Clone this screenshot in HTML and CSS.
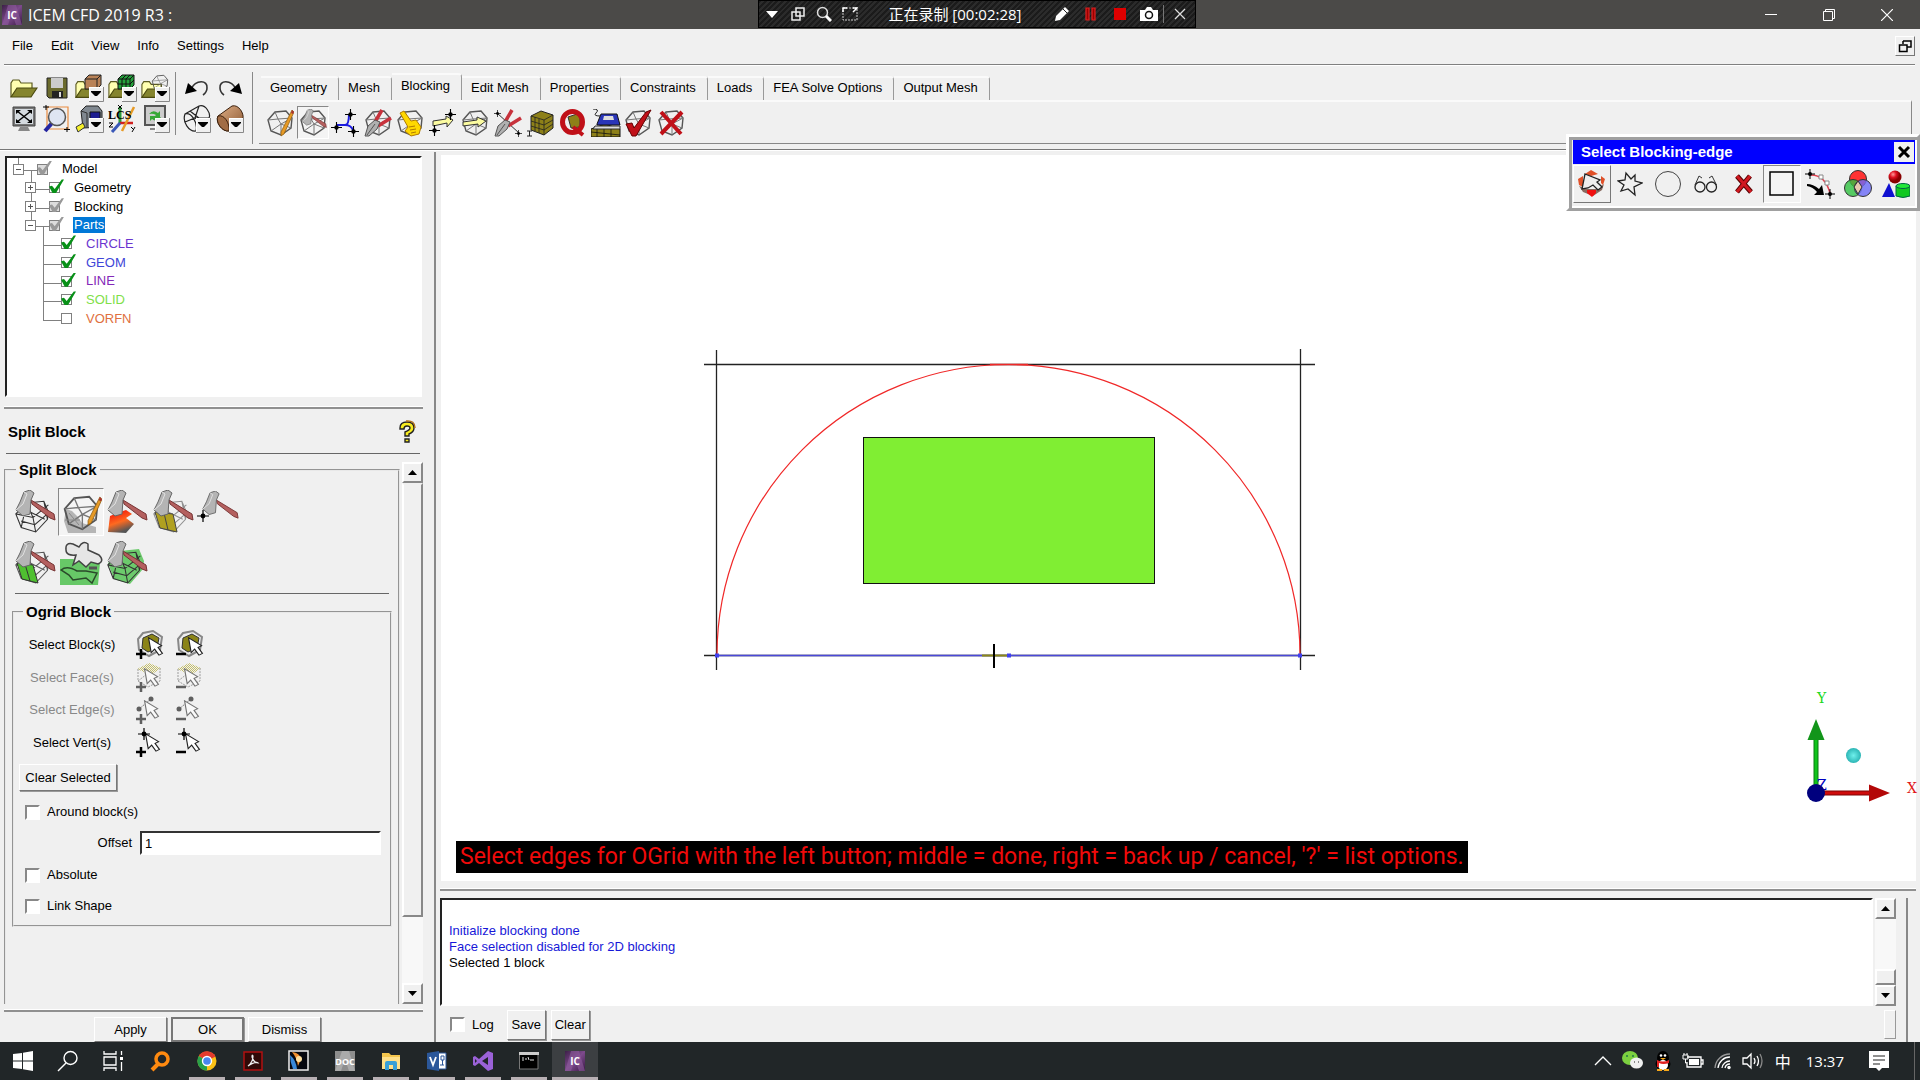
FILE: index.html
```html
<!DOCTYPE html>
<html lang="en">
	<head>
		<meta charset="utf-8" />
		<title>ICEM CFD 2019 R3</title>
		<meta name="viewport" content="width=device-width, initial-scale=1.0">
		<link rel="stylesheet" href="styles.css">
	</head>
	<body>
		<!-- shared drawings -->
		<svg class="defs" aria-hidden="true">
			<defs>
				<linearGradient id="fire" x1="0" y1="0" x2=".4" y2="1"><stop offset="0" stop-color="#e00"/><stop offset=".6" stop-color="#ff6a20"/><stop offset="1" stop-color="#555"/></linearGradient>
				<linearGradient id="wood" x1="0" y1="0" x2="1" y2="1"><stop offset="0" stop-color="#e0b088"/><stop offset="1" stop-color="#8a5630"/></linearGradient>
				<linearGradient id="purple" x1="0" y1="0" x2="1" y2="1"><stop offset="0" stop-color="#3d1f48"/><stop offset=".5" stop-color="#7d4a8c"/><stop offset="1" stop-color="#3a1a45"/></linearGradient>
				<radialGradient id="teal"><stop offset="0" stop-color="#6ff0ec"/><stop offset="1" stop-color="#2cb5b5"/></radialGradient>
				<radialGradient id="ball" cx=".35" cy=".3"><stop offset="0" stop-color="#ff9a9a"/><stop offset=".5" stop-color="#e01020"/><stop offset="1" stop-color="#800"/></radialGradient>
				<pattern id="dots" width="2" height="2" patternUnits="userSpaceOnUse"><rect width="1" height="1" fill="#a89e10"/><rect x="1" y="1" width="1" height="1" fill="#a89e10"/></pattern>
			</defs>
			<symbol id="wire" viewBox="0 0 28 28">
				<path d="M9 3 20 2 26 9 25 19 15 26 5 22 2 11Z" fill="none" stroke="#555" stroke-width="1.4"/>
				<path d="M9 3 12 10 26 9M2 11 12 10 15 15 15 26M5 22 15 15 25 19M15 15 26 9" fill="none" stroke="#777" stroke-width="1"/>
			</symbol>
			<symbol id="axe" viewBox="0 0 42 42">
				<path d="M17 10 40 24 41 30 36 28 18 14Z" fill="#b4605f" stroke="#733" stroke-width="1"/>
				<path d="M10 2 16 0 20 3 17 10 16 24 9 26 2 20 6 12Z" fill="#b4b4b4" stroke="#666" stroke-width="1"/>
				<path d="M10 2 13 4 9 14 2 20" fill="none" stroke="#e2e2e2" stroke-width="1"/>
			</symbol>
			<symbol id="cage" viewBox="0 0 42 42">
				<path d="M14 10 33 8 38 20 37 28 24 42 8 37 2 22ZM2 22 21 26 38 12M21 26 24 42M14 10 8 37M8 30 23 34 37 22M2 22 14 10 21 26M33 8 37 28M14 18 34 28" fill="none" stroke="#333" stroke-width="1.2"/>
			</symbol>
			<symbol id="pencil" viewBox="0 0 28 28">
				<path d="M26 1 28 3 18 25 15 27 15 23Z" fill="#e79a25" stroke="#8a5a10" stroke-width=".7"/>
				<path d="M26 1 28 3 27 5 25 4Z" fill="#a33"/>
			</symbol>
			<symbol id="spark" viewBox="0 0 12 12"><path d="M6 0V12M0 6H12" stroke="#000" stroke-width="1.2"/><circle cx="6" cy="6" r="2.4"/></symbol>
			<symbol id="drop" viewBox="0 0 15 15"><path d="M0 0H15V15H0Z" fill="#efefef"/><path d="M0 15V0H15" fill="none" stroke="#fff" stroke-width="2"/><path d="M0 14.5H14.5V0" fill="none" stroke="#888"/><path d="M2 4H12V5L8 9H6L2 5Z"/></symbol>
			<symbol id="folder" viewBox="0 0 28 22"><path d="M1 20V6L3 3H9L11 6H22V11" fill="#ffffb0" stroke="#5b5a20" stroke-width="1.2"/><path d="M1 20 7 11H27L21 20Z" fill="#85852e" stroke="#4b4a10" stroke-width="1.2"/></symbol>
			<symbol id="arrow" viewBox="0 0 18 22"><path d="M1 1 4 18 8 14 13 21 17 19 12 12 16 10Z" fill="#fff" stroke="#222" stroke-width="1.3"/></symbol>
			<symbol id="pliers" viewBox="0 0 28 28"><path d="M11 13 18 1M14 17 27 9" stroke="#c8323c" stroke-width="3.5" fill="none"/><path d="M1 27 4 17 11 11 16 13 13 20 5 27Z" fill="#b0b0b0" stroke="#555"/><path d="M3 26 11 15" stroke="#555"/></symbol>
			<symbol id="plus" viewBox="0 0 10 10"><path d="M5 0V10M0 5H10" stroke="#000" stroke-width="2.5"/></symbol>
			<symbol id="minus" viewBox="0 0 10 10"><path d="M0 5H10" stroke="#000" stroke-width="2.5"/></symbol>
			<symbol id="iclogo" viewBox="0 0 20 20"><path d="M0 0H20V20H0Z" fill="url(#purple)"/><path d="M6 0H14L20 20H14L10 8 6 20H0Z" fill="#8d5c9c" opacity=".6"/></symbol>
		</svg>

		<header class="titlebar">
			<svg width="20" height="20"><use href="#iclogo"/><text x="10" y="14" class="ic-text">IC</text></svg>
			<h1>ICEM CFD 2019 R3 :</h1>
			<div class="window-controls">
				<button aria-label="Minimize"><svg width="12" height="12"><path d="M0 5.5H12" stroke="#fff"/></svg></button>
				<button aria-label="Restore"><svg width="12" height="12"><path d="M.5 2.5H9.5V11.5H.5ZM2.5 2V.5H11.5V9.5H10" fill="none" stroke="#fff"/></svg></button>
				<button aria-label="Close"><svg width="12" height="12"><path d="M0 0 12 12M12 0 0 12" stroke="#fff" stroke-width="1.2"/></svg></button>
			</div>
		</header>

		<div class="recorder">
			<div class="rec-left">
				<button aria-label="Menu"><svg width="14" height="14"><path d="M1 4H13L7 11Z" fill="#fff"/></svg></button>
				<button aria-label="Window"><svg width="14" height="14"><path d="M5 1H13V9H5ZM1 5H9V13H1Z" fill="none" stroke="#eee" stroke-width="1.5"/></svg></button>
				<button aria-label="Zoom"><svg width="16" height="16"><circle cx="6.5" cy="6.5" r="5" fill="none" stroke="#ddd" stroke-width="1.5"/><path d="M10 10 15 15" stroke="#fff" stroke-width="3"/></svg></button>
				<button aria-label="Region"><svg width="16" height="14"><path d="M1 1H15V13H1Z" fill="none" stroke="#ccc" stroke-dasharray="2 1"/><path d="M1 5V1H5M11 1H15L11 5" fill="none" stroke="#fff" stroke-width="1.5"/></svg></button>
			</div>
			<span class="rec-time">正在录制 [00:02:28]</span>
			<div class="rec-right">
				<button aria-label="Draw"><svg width="18" height="18"><path d="M2 16 3 11 12 2 16 6 7 15Z" fill="#fff"/><path d="M10 4 14 8" stroke="#222"/></svg></button>
				<button aria-label="Pause"><svg width="12" height="14"><path d="M1 1H4V13H1ZM7 1H10V13H7Z" fill="#900" stroke="#e22020" stroke-width="1.2"/></svg></button>
				<button aria-label="Stop"><svg width="12" height="12"><path d="M0 0H12V12H0Z" fill="#e00000"/></svg></button>
				<button aria-label="Snapshot"><svg width="18" height="14"><path d="M0 3H5L7 0H11L13 3H18V14H0Z" fill="#fff"/><circle cx="9" cy="8" r="3.5" fill="none" stroke="#111" stroke-width="1.5"/></svg></button>
				<button class="rec-close" aria-label="Close recorder"><svg width="12" height="12"><path d="M1 1 11 11M11 1 1 11" stroke="#ddd" stroke-width="1.2"/></svg></button>
			</div>
		</div>

		<nav class="menubar">
			<a href="#">File</a><a href="#">Edit</a><a href="#">View</a><a href="#">Info</a><a href="#">Settings</a><a href="#">Help</a>
			<button class="mdi" aria-label="Restore view"><svg width="14" height="14"><path d="M5 2H13V8H9M5 5V2" fill="none" stroke="#000" stroke-width="1.5"/><path d="M1.5 6H9V12.5H1.5Z" fill="none" stroke="#000" stroke-width="1.5"/></svg></button>
		</nav>

		<div class="toolbar">
			<div class="tools files">
				<button aria-label="Open project"><svg width="28" height="22"><use href="#folder"/></svg></button>
				<button aria-label="Save project"><svg width="22" height="22"><path d="M1 1H21V21H3L1 19Z" fill="#6b6b2e" stroke="#222"/><path d="M5 1H17V11H5Z" fill="#ccc"/><path d="M6 14H17V21H6Z" fill="#222"/><path d="M13 15H15V20H13Z" fill="#ddd"/></svg></button>
				<button aria-label="Open geometry"><svg width="30" height="28"><use href="#folder" y="4" width="26" height="22"/><path d="M10 5 14 1H26V11L22 15H10Z" fill="#b98257" stroke="#222"/><path d="M10 5H22V15M22 5 26 1" fill="none" stroke="#222"/><use href="#drop" x="14" y="13" width="15" height="15"/></svg></button>
				<button aria-label="Open mesh"><svg width="30" height="28"><use href="#folder" y="4" width="26" height="22"/><path d="M10 5 14 1H26V11L22 15H10Z" fill="#25a13c" stroke="#111"/><path d="M10 5H22V15M22 5 26 1M14 5V15M18 5V15M10 10H22L26 6M14 5 18 1M18 5 22 1" fill="none" stroke="#111"/><use href="#drop" x="14" y="13" width="15" height="15"/></svg></button>
				<button aria-label="Open blocking"><svg width="30" height="28"><use href="#folder" y="4" width="26" height="22"/><use href="#wire" x="10" width="18" height="18"/><use href="#drop" x="14" y="13" width="15" height="15"/></svg></button>
				<button aria-label="Fit window"><svg width="26" height="26"><path d="M2 1H24V20H2Z" fill="#777" stroke="#444"/><path d="M4 3H22V18H4Z" fill="#d5dbe0"/><path d="M6 5 20 16M20 5 6 16" stroke="#000" stroke-width="1.5"/><path d="M5 4H10L5 8ZM21 4H16L21 8ZM5 17H10L5 13ZM21 17H16L21 13Z"/><path d="M9 21H17L19 25H7Z" fill="#888"/></svg></button>
				<button aria-label="Box zoom"><svg width="28" height="28"><path d="M4 2H25V24H4Z" fill="none" stroke="#e98c40" stroke-width="1.2"/><path d="M10 17 2 26" stroke="#2525a0" stroke-width="4"/><circle cx="14" cy="12" r="8.5" fill="#dfe5f2" stroke="#555" stroke-width="1.5"/><path d="M24 22V27M21 24.5H27M0 2H6M3 0V5" stroke="#000"/></svg></button>
				<button aria-label="Measure"><svg width="30" height="28"><path d="M6 6 11 1H23L27 6V22L8 23Z" fill="#808890" stroke="#222"/><path d="M15 7H25V14H15Z" fill="#1c1c90" stroke="#111"/><path d="M6 6 12 8V22" fill="none" stroke="#333"/><path d="M1 22 8 18 10 22 3 27Z" fill="#f5f02a" stroke="#333"/><use href="#drop" x="14" y="13" width="15" height="15"/></svg></button>
				<button aria-label="Local coordinate system"><svg width="30" height="28"><path d="M12 18V2" stroke="#2a9a3a" stroke-width="3"/><path d="M12 18H25" stroke="#d02020" stroke-width="2.5"/><path d="M12 18 4 27" stroke="#3a58b8" stroke-width="3"/><path d="M26 2 14 26" stroke="#e79a25" stroke-width="2.5"/><text x="0" y="14" class="lcs">LCS</text><path d="M10 0 14 4M14 0 10 4M1 18H5L1 22H5M23 22 25 24M27 22 24 27" stroke="#000" fill="none"/></svg></button>
				<button aria-label="Refresh"><svg width="30" height="28"><path d="M4 1H24V20H4Z" fill="#ccc" stroke="#555" stroke-width="2"/><path d="M8 9Q12 4 17 8L19 6V12H13L15 10Q12 8 8 9M20 12Q16 18 11 14L9 16V11H14" fill="#37a837"/><path d="M9 24H16" stroke="#888" stroke-width="2"/><use href="#drop" x="14" y="13" width="15" height="15"/></svg></button>
			</div>
			<div class="tools views">
				<button aria-label="Undo"><svg width="26" height="18"><path d="M7 10C12 0 24 1 23 9Q23 13 19 16" fill="none" stroke="#333" stroke-width="1.6"/><path d="M1 15 4 4 13 12Z"/></svg></button>
				<button aria-label="Redo"><svg width="26" height="18"><path d="M19 10C14 0 2 1 3 9Q3 13 7 16" fill="none" stroke="#333" stroke-width="1.6"/><path d="M25 15 22 4 13 12Z"/></svg></button>
				<button aria-label="Wireframe"><svg width="30" height="30"><path d="M3 10 17 2C24 0 29 10 27 14L14 27C7 28 0 18 3 10ZM3 10C9 8 16 18 14 27M17 2 13 14 27 14M3 18 13 14 22 20M8 7 22 18" fill="none" stroke="#222" stroke-width="1.2"/><use href="#drop" x="14" y="14" width="15" height="15"/></svg></button>
				<button aria-label="Solid"><svg width="30" height="30"><path d="M3 12 17 2C24 0 29 10 28 14L14 27C7 28 0 18 3 12Z" fill="url(#wood)" stroke="#3a200d"/><path d="M3 12C9 10 15 19 14 27 7 28 0 18 3 12Z" fill="#a26d45" stroke="#3a200d"/><use href="#drop" x="14" y="14" width="15" height="15"/></svg></button>
			</div>
			<div class="tabs">
				<div class="tablist">
					<button>Geometry</button><button>Mesh</button><button class="current">Blocking</button><button>Edit Mesh</button><button>Properties</button><button>Constraints</button><button>Loads</button><button>FEA Solve Options</button><button>Output Mesh</button>
				</div>
				<div class="tabpanel">
					<div class="blocktools">
						<button aria-label="Create block"><svg width="28" height="28"><use href="#wire"/><use href="#pencil"/></svg></button>
						<button class="sunken" aria-label="Split block"><svg width="28" height="28"><use href="#wire"/><use href="#axe" width="28" height="26" x="1"/></svg></button>
						<button aria-label="Merge vertices"><svg width="28" height="28"><path d="M6 16H14Q18 16 18 5M14 16Q20 16 22 21" fill="none" stroke="#1c1ce0" stroke-width="2"/><use href="#spark" x="14" y="0" width="11" height="11"/><use href="#spark" x="0" y="13" width="11" height="11"/><use href="#spark" x="17" y="17" width="11" height="11"/></svg></button>
						<button aria-label="Edit block"><svg width="28" height="28"><use href="#wire"/><use href="#pliers"/></svg></button>
						<button aria-label="Associate"><svg width="28" height="28"><use href="#wire"/><path d="M4 4 8 2 15 12 20 11 25 18 23 25 15 27 9 22 12 18Z" fill="#ffd800" stroke="#b07a00"/><path d="M13 18 19 17M14 21 20 20M15 24 20 23" stroke="#b07a00"/></svg></button>
						<button aria-label="Move vertex"><svg width="28" height="28"><path d="M4 12 17 10V7L24 11 18 18V14L4 17Z" fill="#fbfba0" stroke="#333"/><use href="#spark" x="16" y="0" width="11" height="11"/><use href="#spark" x="0" y="16" width="11" height="11"/></svg></button>
						<button aria-label="Transform blocks"><svg width="28" height="28"><use href="#wire"/><path d="M2 13 16 11V8L25 12 17 18V15L2 17Z" fill="#fbfba0" stroke="#333"/></svg></button>
						<button aria-label="Edit edge"><svg width="28" height="28"><path d="M3 4 25 24" stroke="#333"/><use href="#pliers"/><use href="#spark" x="0" y="1" width="7" height="7"/><use href="#spark" x="21" y="21" width="7" height="7"/></svg></button>
						<button aria-label="Pre-mesh params"><svg width="28" height="28"><path d="M4 7 14 2 26 6V19L17 26 4 21Z" fill="#8d8018" stroke="#222"/><path d="M4 7 17 11 26 6M17 11V26M4 12 17 16 26 11M4 17 17 21 26 15M8 8V22M12 10V24" fill="none" stroke="#222" stroke-width=".8"/><path d="M0 22H5M0 27H5M2.5 22V27" stroke="#222"/></svg></button>
						<button aria-label="Pre-mesh quality"><svg width="28" height="28"><path d="M9 8 18 5 21 9V18L12 19Z" fill="#8d8018" stroke="#333"/><ellipse cx="13.5" cy="13" rx="10" ry="10.5" fill="none" stroke="#c01018" stroke-width="5"/><path d="M14 18 24 26" stroke="#c01018" stroke-width="4"/></svg></button>
						<button aria-label="Smooth"><svg width="30" height="28"><path d="M0 20 14 15 29 20V28H0Z" fill="#8d8018" stroke="#111"/><path d="M0 23 29 26M6 19V28M13 17V28M20 18V28" stroke="#111" stroke-width=".8"/><path d="M6 15 10 5H26L29 16H6Z" fill="#2a35b8" stroke="#111"/><path d="M13 7H22L23 11H12Z" fill="#ddd"/><path d="M4 17H29V20H2Z" fill="#ddd" stroke="#333"/><path d="M2 0Q9 0 5 4 2 7 9 7" fill="none" stroke="#222"/></svg></button>
						<button aria-label="Block checks"><svg width="28" height="28"><use href="#wire"/><path d="M2 15 8 14 10 19 22 3 27 1 12 27H8Z" fill="#c01018" stroke="#600"/></svg></button>
						<button aria-label="Delete block"><svg width="28" height="28"><use href="#wire"/><path d="M4 3 24 25M25 3 4 25" stroke="#c01018" stroke-width="4"/></svg></button>
					</div>
				</div>
			</div>
		</div>

		<main>
			<section class="side">
				<div class="tree">
					<svg class="branches" width="80" height="172"><path d="M11.5 0V12M17 12.5H30M24.5 12V69M29 31.5H42M29 50.5H42M29 68.5H42M36.5 69V162.500M36 87.500H54M36 106.500H54M36 125.500H54M36 143.500H54M36 162.500H54" fill="none" stroke="#808080"/></svg>
					<ul>
						<li><button class="minus" aria-label="Collapse"></button><label><input type="checkbox" class="part" checked><span>Model</span></label></li>
						<li class="l1"><button class="plus" aria-label="Expand"></button><label><input type="checkbox" checked><span>Geometry</span></label></li>
						<li class="l1"><button class="plus" aria-label="Expand"></button><label><input type="checkbox" class="part" checked><span>Blocking</span></label></li>
						<li class="l1"><button class="minus" aria-label="Collapse"></button><label><input type="checkbox" class="part" checked><span class="selected">Parts</span></label></li>
						<li class="l2 circle"><label><input type="checkbox" checked><span>CIRCLE</span></label></li>
						<li class="l2 geom"><label><input type="checkbox" checked><span>GEOM</span></label></li>
						<li class="l2 line"><label><input type="checkbox" checked><span>LINE</span></label></li>
						<li class="l2 solid"><label><input type="checkbox" checked><span>SOLID</span></label></li>
						<li class="l2 vorfn"><label><input type="checkbox"><span>VORFN</span></label></li>
					</ul>
				</div>
				<div class="rule"></div>
				<div class="side-head">
					<h2>Split Block</h2>
					<button aria-label="Help"><svg width="18" height="24"><path d="M2 8Q2 2 9 2 16 2 16 8 16 12 11 14V16H7V12Q12 10 12 8 12 6 9 6 6 6 6 9H2ZM7 19H11V22H7Z" fill="#f8ec20" stroke="#222" stroke-width="1.4"/><path d="M8 1Q17 0 17 8" fill="none" stroke="#b07020" stroke-width="1.5"/></svg></button>
				</div>
				<div class="side-body">
					<fieldset class="group">
						<legend>Split Block</legend>
						<div class="splits">
							<button aria-label="Split block"><svg width="42" height="44"><use href="#cage" width="38" height="42" y="2"/><use href="#axe" width="42" height="42"/></svg></button>
							<button class="sunken" aria-label="Ogrid block"><svg width="42" height="42"><path d="M6 18 12 20 18 26 22 32 36 36V42H8L4 30Z" fill="#b5b5b5"/><use href="#wire" x="2" y="3" width="38" height="38"/><path d="M9 22 19 34M5 29 20 29" stroke="#888"/><use href="#pencil" x="12" width="30" height="40"/></svg></button>
							<button aria-label="Extend split"><svg width="42" height="44"><path d="M4 26 14 22 20 20 26 24 20 28 28 34 20 43 2 42Z" fill="url(#fire)"/><use href="#axe" width="42" height="42"/></svg></button>
							<button aria-label="Split face"><svg width="42" height="44"><use href="#cage" width="38" height="42" y="2" opacity=".5"/><path d="M3 22 21 24 25 42 8 38Z" fill="#b0a020" stroke="#444"/><path d="M12 23 16 40" stroke="#444"/><use href="#axe" width="42" height="42"/></svg></button>
							<button aria-label="Split vertices"><svg width="44" height="42"><use href="#axe" x="4" width="38" height="38"/><use href="#spark" x="0" y="18" width="12" height="14"/></svg></button>
							<button aria-label="Split free face"><svg width="42" height="44"><use href="#cage" width="38" height="42" y="2" opacity=".8"/><path d="M3 22 19 24 24 42 8 38Z" fill="#4fc030" stroke="#333"/><path d="M11 23 16 40" stroke="#333"/><use href="#axe" width="42" height="42"/></svg></button>
							<button aria-label="Imprint face"><svg width="44" height="44"><path d="M1 18H14L26 22H41L39 44H1Z" fill="#67c867"/><path d="M7 9Q6 1 14 3L20 6Q24-1 29 3V9L40 14Q46 20 39 23L32 21 27 26 20 20 14 24 17 14Q7 15 7 9Z" fill="#e6e6e6" stroke="#444" stroke-width="1.5"/><path d="M2 29Q8 24 18 30L27 30 38 32 33 42 27 37 14 39 10 34Z" fill="none" stroke="#2a4a2a" stroke-width="1.5"/><path d="M30 27H38" stroke="#555" stroke-width="3"/></svg></button>
							<button aria-label="Split unstructured"><svg width="42" height="44"><path d="M14 10 33 8 38 20 37 28 24 43 8 38 2 22Z" fill="#6cca6c"/><use href="#cage" width="38" height="42" y="2"/><use href="#axe" width="42" height="42"/></svg></button>
						</div>
						<hr>
						<fieldset class="ogrid">
							<legend>Ogrid Block</legend>
							<div class="selects">
								<span>Select Block(s)</span>
								<button aria-label="Add blocks"><svg width="30" height="30"><path d="M8 3 18 1 27 7 25 20 14 26 4 20 3 9Z" fill="#eee" stroke="#888" stroke-width="2"/><path d="M8 8 17 4 24 8 22 18 13 22 7 18Z" fill="#8b8418" stroke="#333"/><use href="#arrow" x="12" y="7" width="17" height="19"/><use href="#plus" x="1" y="19" width="10" height="10"/></svg></button>
								<button aria-label="Remove blocks"><svg width="30" height="30"><path d="M8 3 18 1 27 7 25 20 14 26 4 20 3 9Z" fill="#eee" stroke="#888" stroke-width="2"/><path d="M8 8 17 4 24 8 22 18 13 22 7 18Z" fill="#8b8418" stroke="#333"/><use href="#arrow" x="12" y="7" width="17" height="19"/><use href="#minus" x="1" y="19" width="10" height="10"/></svg></button>
								<span class="off">Select Face(s)</span>
								<button disabled aria-label="Add faces"><svg width="30" height="30"><path d="M2 6 14 0 26 5 16 12Z" fill="url(#dots)"/><path d="M3 6V18L13 24 25 18V5M3 18 12 11" fill="none" stroke="#666" stroke-dasharray="2 1"/><use href="#arrow" x="8" y="5" width="17" height="19"/><use href="#plus" x="1" y="19" width="10" height="10"/></svg></button>
								<button disabled aria-label="Remove faces"><svg width="30" height="30"><path d="M2 6 14 0 26 5 16 12Z" fill="url(#dots)"/><path d="M3 6V18L13 24 25 18V5M3 18 12 11" fill="none" stroke="#666" stroke-dasharray="2 1"/><use href="#arrow" x="8" y="5" width="17" height="19"/><use href="#minus" x="1" y="19" width="10" height="10"/></svg></button>
								<span class="off">Select Edge(s)</span>
								<button disabled aria-label="Add edges"><svg width="30" height="30"><path d="M3 15 17 3" stroke="#333" stroke-dasharray="2 1"/><circle cx="4" cy="14" r="2.5"/><circle cx="16" cy="4" r="2.5"/><use href="#arrow" x="8" y="5" width="17" height="19"/><use href="#plus" x="1" y="19" width="10" height="10"/></svg></button>
								<button disabled aria-label="Remove edges"><svg width="30" height="30"><path d="M3 15 17 3" stroke="#333" stroke-dasharray="2 1"/><circle cx="4" cy="14" r="2.5"/><circle cx="16" cy="4" r="2.5"/><use href="#arrow" x="8" y="5" width="17" height="19"/><use href="#minus" x="1" y="19" width="10" height="10"/></svg></button>
								<span>Select Vert(s)</span>
								<button aria-label="Add vertices"><svg width="30" height="30"><use href="#arrow" x="9" y="5" width="17" height="19"/><use href="#spark" x="3" y="0" width="12" height="12"/><use href="#plus" x="1" y="19" width="10" height="10"/></svg></button>
								<button aria-label="Remove vertices"><svg width="30" height="30"><use href="#arrow" x="9" y="5" width="17" height="19"/><use href="#spark" x="3" y="0" width="12" height="12"/><use href="#minus" x="1" y="19" width="10" height="10"/></svg></button>
							</div>
							<button class="btn">Clear Selected</button>
							<label class="option"><input type="checkbox" class="box">Around block(s)</label>
							<div class="offset"><label for="offset">Offset</label><input id="offset" type="text" value="1"></div>
							<label class="option"><input type="checkbox" class="box">Absolute</label>
							<label class="option"><input type="checkbox" class="box">Link Shape</label>
						</fieldset>
					</fieldset>
					<div class="scrollbar">
						<button class="up" aria-label="Scroll up"></button>
						<div class="thumb long"></div>
						<button class="down" aria-label="Scroll down"></button>
					</div>
				</div>
				<div class="rule"></div>
				<div class="actions"><button class="btn">Apply</button><button class="btn default">OK</button><button class="btn">Dismiss</button></div>
			</section>

			<section class="work">
				<div class="canvas">
					<!-- blocking edges, geometry curves and the solid face -->
					<svg class="scene">
						<rect x="422.5" y="282.5" width="291" height="146" fill="#80ee33" stroke="#111"/>
						<path d="M263 209.5H874M275.5 195V515M859.5 194V515M263 500.5H874" stroke="#222" stroke-width="1.3"/>
						<path d="M276 500A291.5 290.5 0 0 1 859 500" fill="none" stroke="#f02828" stroke-width="1.2"/>
						<path d="M549 209.5H587" stroke="#f02828" stroke-width="1.3"/>
						<path d="M276 500.5H859" stroke="#4a48d8" stroke-width="1.5"/>
						<path d="M541 500.5H566" stroke="#8c8818" stroke-width="2"/>
						<path d="M553 489V513" stroke="#000" stroke-width="2"/>
						<path d="M274 498.5H278V502.5H274ZM566 498.5H570V502.5H566ZM857 498.5H861V502.5H857Z" fill="#4040f0"/>
					</svg>
					<svg class="triad" width="120" height="140">
						<path d="M18 50H22V106H18Z" fill="#0fc41a" stroke="#087a10"/>
						<path d="M20 34 28.5 55H11.5Z" fill="#12951a"/>
						<path d="M20 106H74V110H20Z" fill="#cf0b0b" stroke="#7d0505"/>
						<path d="M94 108 73 99.5V116.5Z" fill="#b30808"/>
						<text x="21" y="105" class="axis z">Z</text>
						<circle cx="20" cy="108" r="9" fill="#00007e"/>
						<circle cx="57.5" cy="70.5" r="7.5" fill="url(#teal)"/>
						<text x="21" y="18" class="axis y">Y</text>
						<text x="111" y="108" class="axis x">X</text>
					</svg>
					<div class="prompt">Select edges for OGrid with the left button; middle = done, right = back up / cancel, '?' = list options.</div>
				</div>
				<div class="rule"></div>
				<div class="messages">
					<div class="log-row">
						<div class="log"><p class="info">Initialize blocking done</p><p class="info">Face selection disabled for 2D blocking</p><p>Selected 1 block</p></div>
						<div class="scrollbar">
							<button class="up" aria-label="Scroll up"></button>
							<div class="trough"></div>
							<div class="thumb short"></div>
							<button class="down" aria-label="Scroll down"></button>
						</div>
					</div>
					<div class="log-tools">
						<label class="option"><input type="checkbox" class="box">Log</label>
						<button class="btn">Save</button><button class="btn">Clear</button>
						<span class="stub"></span>
					</div>
				</div>
			</section>
		</main>

		<div class="popup">
			<div class="popup-title"><h2>Select Blocking-edge</h2><button aria-label="Close"><svg width="14" height="14"><path d="M2 2 12 12M12 2 2 12" stroke="#000" stroke-width="3"/></svg></button></div>
			<div class="popup-tools">
				<button class="raised" aria-label="Toggle selection"><svg width="30" height="30"><path d="M1 10 6 7V18L2 16ZM8 5 14 1 21 5 14 7ZM24 7 28 10 26 16 24 14Z" fill="#e05028"/><path d="M2 17 10 20 20 20 27 15 25 21 16 27 6 23Z" fill="#8a6a60"/><path d="M8 5 23 11 20 13 25 18 21 21 16 16 11 19 5 20Z" fill="#eee" stroke="#222" stroke-width="1.3"/><path d="M10 21H19V24L15 28 10 24Z" fill="#f01010"/></svg></button>
				<button aria-label="Polygon"><svg width="26" height="26"><path d="M1 10 8 9 9 2 14 8 18 4 18 10 25 12 17 16 18 24 11 18 4 20 7 14Z" fill="none" stroke="#222" stroke-width="1.3"/></svg></button>
				<button aria-label="Circle"><svg width="26" height="26"><circle cx="13" cy="13" r="12.5" fill="none" stroke="#444"/></svg></button>
				<button aria-label="Visible"><svg width="26" height="22"><circle cx="7" cy="14" r="5" fill="none" stroke="#222" stroke-width="1.3"/><circle cx="18.5" cy="14" r="5" fill="none" stroke="#222" stroke-width="1.3"/><path d="M2 12 6 3 9 5M23.5 12 19 3 16 5" fill="none" stroke="#333"/></svg></button>
				<button aria-label="Cancel"><svg width="20" height="22"><path d="M3 3 17 19M16 3 3 19" stroke="#500" stroke-width="5"/><path d="M3 3 17 19M16 3 3 19" stroke="#d01820" stroke-width="3"/></svg></button>
				<button class="sunken" aria-label="Rectangle"><svg width="26" height="26"><path d="M1 1H24V24H1Z" fill="none" stroke="#000" stroke-width="1.5"/></svg></button>
				<button aria-label="Connected edges"><svg width="30" height="30"><path d="M6 6Q20 6 25 24" fill="none" stroke="#e04050" stroke-width="1.5"/><path d="M14 6H18V10H14ZM20 12H24V16H20Z" fill="#fff" stroke="#888"/><path d="M2 15Q8 15 14 20L17 16 19 26 9 26 12 23Q8 18 2 17Z"/><use href="#spark" x="0" y="0" width="10" height="10"/><use href="#spark" x="20" y="20" width="10" height="10"/></svg></button>
				<button aria-label="By part"><svg width="28" height="28"><circle cx="14" cy="9" r="8.5" fill="#f33" stroke="#333"/><circle cx="9" cy="18" r="8.5" fill="#30c040" fill-opacity=".8" stroke="#333"/><circle cx="19" cy="18" r="8.5" fill="#6a6af8" fill-opacity=".8" stroke="#333"/><path d="M14 11 18 17 14 24 10 17Z" fill="#e8c8b0" stroke="#333"/></svg></button>
				<button aria-label="By type"><svg width="28" height="28"><circle cx="13" cy="7" r="6.5" fill="url(#ball)"/><path d="M7 13 13 27H0Z" fill="#1010d0"/><path d="M14 16V26Q21 29 28 26V16Z" fill="#10c820" stroke="#064"/><ellipse cx="21" cy="16" rx="7" ry="2.5" fill="#20e838" stroke="#064"/></svg></button>
			</div>
		</div>

		<footer class="taskbar">
			<div class="sys">
				<button aria-label="Start"><svg width="20" height="20"><path d="M0 3 9 2V9.5H0ZM10 1.8 20 0V9.5H10ZM0 10.5H9V18L0 17ZM10 10.5H20V20L10 18.3Z" fill="#fff"/></svg></button>
				<button aria-label="Search"><svg width="22" height="22"><circle cx="13.5" cy="8" r="6.5" fill="none" stroke="#fff" stroke-width="1.4"/><path d="M9 13 1 21" stroke="#fff" stroke-width="1.5"/></svg></button>
				<button aria-label="Task view"><svg width="20" height="20"><path d="M1 0V3H13V0M1 20V17H13V20M1 6H13V14H1ZM18.5 0V4M18.5 11V20" fill="none" stroke="#fff" stroke-width="1.3"/><path d="M17 6H20V9H17Z" fill="#fff"/></svg></button>
			</div>
			<div class="apps">
				<button aria-label="Everything"><svg width="22" height="22"><circle cx="12" cy="9" r="6" fill="none" stroke="#ff8a10" stroke-width="3.5"/><path d="M8 14 2 20" stroke="#ff8a10" stroke-width="4"/></svg></button>
				<button class="open" aria-label="Chrome"><svg width="20" height="20"><circle cx="10" cy="10" r="9.5" fill="#fbc116"/><path d="M10 10 1.8 5A9.5 9.5 0 0 1 18.5 5.5Z" fill="#e33b2e"/><path d="M10 10 10 19.5A9.5 9.5 0 0 1 1.8 5Z" fill="#28a049"/><circle cx="10" cy="10" r="4.5" fill="#4a86f0" stroke="#fff" stroke-width="1.4"/></svg></button>
				<button class="open" aria-label="Acrobat"><svg width="20" height="20"><path d="M1 1H19V19H1Z" fill="#300a08" stroke="#b01010" stroke-width="1.5"/><path d="M5 15Q10 11 10 5 9 3 9 6 11 12 15 12 13 10 5 15" fill="none" stroke="#eee" stroke-width="1.2"/></svg></button>
				<button class="open" aria-label="Viewer"><svg width="22" height="22"><path d="M1 1H20V20H1Z" fill="#05070f" stroke="#eee" stroke-width="1.5"/><path d="M2 5Q8 10 9 19H5Q2 12 2 5" fill="#3a88d8"/><path d="M4 2Q12 3 13 9L10 16Q9 8 4 2" fill="#f09030"/><circle cx="11" cy="9" r="3" fill="#ffe0a0"/></svg></button>
				<button class="open" aria-label="DOC"><svg width="20" height="20"><path d="M0 0H20V20H0Z" fill="#8e8e8e"/><path d="M7 0H14L20 20H14L10 8 6 20H0Z" fill="#aaa"/><text x="10" y="14" class="doc-text">DOC</text></svg></button>
				<button class="open" aria-label="Explorer"><svg width="20" height="20"><path d="M1 2H8L10 4H19V18H1Z" fill="#f5c64d"/><path d="M1 6H19V18H1Z" fill="#ffe08a"/><path d="M4 19V12Q4 10 6 10H14Q16 10 16 12V19H12V14H8V19Z" fill="#38a0d8"/></svg></button>
				<button class="open" aria-label="Visio"><svg width="20" height="20"><path d="M10 2H19V18H10Z" fill="#fff" stroke="#2b579a"/><path d="M14 5H17V9H14ZM15.5 9V14M13 14H17" fill="none" stroke="#2b579a"/><path d="M0 2 12 0V20L0 18Z" fill="#2b579a"/><path d="M3 6 6 14 9 6" fill="none" stroke="#fff" stroke-width="1.8"/></svg></button>
				<button class="open" aria-label="Visual Studio"><svg width="20" height="20"><path d="M15 0 20 2V18L15 20 6 12 2 15 0 14V6L2 5 6 8Z" fill="#9b62d8"/><path d="M15 6V14L9 10ZM2 8 4 10 2 12Z" fill="#212529"/></svg></button>
				<button class="open" aria-label="Command prompt"><svg width="20" height="18"><path d="M.5 .5H19V17H.5Z" fill="#000" stroke="#777"/><path d="M0 0H20V3H0Z" fill="#ccc"/><path d="M3 6H5M3 8H5M7 6V8M9 5 10 8M11 8H15" stroke="#ddd"/></svg></button>
				<button class="open active" aria-label="ICEM CFD"><svg width="20" height="20"><use href="#iclogo"/><text x="10" y="14" class="ic-text">IC</text></svg></button>
			</div>
			<div class="tray">
				<button aria-label="Show hidden icons"><svg width="18" height="12"><path d="M1 10 9 2 17 10" fill="none" stroke="#fff" stroke-width="1.3"/></svg></button>
				<button aria-label="WeChat"><svg width="22" height="20"><ellipse cx="8" cy="7" rx="8" ry="7" fill="#7cd040"/><ellipse cx="14.5" cy="12" rx="6.5" ry="5.5" fill="#f0f0f0"/><path d="M4 5H6M10 5H12" stroke="#274" stroke-width="1.5"/><path d="M12 11H13M16 11H17" stroke="#666" stroke-width="1.5"/></svg></button>
				<button aria-label="QQ"><svg width="18" height="20"><ellipse cx="9" cy="7" rx="6" ry="7" fill="#000"/><ellipse cx="9" cy="13" rx="7.5" ry="6" fill="#000"/><ellipse cx="9" cy="14" rx="5" ry="5" fill="#fff"/><path d="M3 9Q9 12 15 9V12Q9 14 5 12V16H3Z" fill="#e02020"/><circle cx="7" cy="4.5" r="1.3" fill="#fff"/><circle cx="11" cy="4.5" r="1.3" fill="#fff"/><path d="M6 7H12L9 9ZM3 18H8V20H3ZM10 18H15V20H10Z" fill="#f8a818"/></svg></button>
				<button aria-label="Battery"><svg width="22" height="16"><path d="M5 4H19V14H5V9M19 7H21V11H19" fill="none" stroke="#fff" stroke-width="1.3"/><path d="M7 6H17V12H7Z" fill="#fff"/><path d="M1 2H6V6H1ZM2 0V2M5 0V2M3.5 6V10H5" fill="none" stroke="#fff"/></svg></button>
				<button aria-label="Network"><svg width="18" height="18"><path d="M1 16A15 15 0 0 1 16 2" fill="none" stroke="#999" stroke-width="1.3"/><path d="M4 16A12 12 0 0 1 16 5M8 16A8 8 0 0 1 16 9M11 16A5 5 0 0 1 16 12" fill="none" stroke="#fff" stroke-width="1.3"/><circle cx="15" cy="15.5" r="1.7" fill="#fff"/></svg></button>
				<button aria-label="Volume"><svg width="22" height="18"><path d="M1 6H5L9 2V16L5 12H1Z" fill="none" stroke="#fff" stroke-width="1.3"/><path d="M12 6Q14 9 12 12M15 4Q18 9 15 14" fill="none" stroke="#fff" stroke-width="1.3"/><path d="M18 2Q22 9 18 16" fill="none" stroke="#888" stroke-width="1.3"/></svg></button>
				<span class="ime">中</span>
				<time>13:37</time>
				<button class="notify" aria-label="Notifications"><svg width="20" height="20"><path d="M0 0H20V17H13L10 20 7 17H0Z" fill="#fff"/><path d="M4 5H16M4 9H16M4 13H11" stroke="#222" stroke-width="1.2"/></svg></button>
				<i></i>
			</div>
		</footer>
	</body>
</html>
```

FILE: styles.css
```css
* {
	box-sizing:border-box;
}
body, html {
	margin:0;
	padding:0;
	height:100%;
}
body {
	display:flex;
	flex-direction:column;
	overflow:hidden;
	background:#f0f0f0;
	color:#000;
	font-family:"Liberation Sans", Arial, sans-serif;
	font-size:13px;
	line-height:16px;
}
h1, h2, p, ul {
	margin:0;
	padding:0;
}
button, input {
	margin:0;
	padding:0;
	border:0;
	background:none;
	color:inherit;
	font:inherit;
}
button {
	display:flex;
	align-items:center;
	justify-content:center;
}
svg {
	display:block;
	flex:none;
}
.defs {
	position:absolute;
	width:0;
	height:0;
}

/* title bar */
.titlebar {
	flex:none;
	display:flex;
	align-items:center;
	height:29px;
	padding:0 4px 0 2px;
	background:#4b4a48;
	color:#fff;
}
.titlebar h1 {
	margin-left:6px;
	font:16px/24px "Open Sans", sans-serif;
}
.window-controls {
	display:flex;
	margin-left:auto;
}
.window-controls button {
	width:58px;
	height:29px;
}
.ic-text, .doc-text {
	fill:#fff;
	font:bold 10px "Open Sans", sans-serif;
	text-anchor:middle;
}
.doc-text {
	font-size:9px;
}
.lcs {
	font:bold 12px "Liberation Serif", serif;
}

/* screen recorder strip, floats over the title bar */
.recorder {
	position:absolute;
	top:0;
	left:50%;
	width:438px;
	height:28px;
	margin-left:-202px;
	display:flex;
	align-items:center;
	border:1px solid #000;
	background:repeating-linear-gradient(135deg, #1b1b1b 0 2px, #2b2b2b 2px 4px);
	color:#fff;
}
.rec-left, .rec-right {
	display:flex;
}
.rec-left button {
	width:26px;
}
.rec-right button {
	width:29px;
}
.rec-right .rec-close {
	width:32px;
	border-left:1px solid #777;
}
.rec-time {
	flex:1;
	font:15px/20px "Open Sans", "Noto Sans CJK SC", sans-serif;
	text-align:center;
	white-space:nowrap;
}

/* menu */
.menubar {
	flex:none;
	display:flex;
	align-items:center;
	gap:18px;
	height:36px;
	margin:0 5px 0 4px;
	padding:0 0 2px 8px;
	border-bottom:1px solid #808080;
	box-shadow:0 1px #fff;
}
.menubar a {
	color:#000;
	text-decoration:none;
}
.mdi {
	width:20px;
	height:20px;
	margin-left:auto;
	border:1px solid;
	border-color:#fff #777 #777 #fff;
}

/* toolbar */
.toolbar {
	flex:none;
	display:flex;
	height:85px;
	padding:7px 8px 0;
	border-bottom:1px solid #777;
	box-shadow:0 1px #fff;
}
.tools {
	display:grid;
	grid-auto-rows:31px;
	height:63px;
	border-right:1px solid #888;
}
.files {
	grid-template-columns:repeat(5, 1fr);
	width:168px;
	padding-right:3px;
}
.views {
	grid-template-columns:1fr 1fr;
	width:77px;
	height:72px;
	padding:0 6px 0 5px;
}
.tabs {
	flex:1;
	margin-left:6px;
}
.tablist {
	display:flex;
	align-items:flex-end;
	height:28px;
	padding-left:2px;
}
.tablist button {
	height:24px;
	padding:0 11px 2px 9px;
	border-top:2px solid #fafafa;
	border-right:1px solid #999;
	border-top-right-radius:4px;
}
.tablist .current {
	height:27px;
	padding-bottom:4px;
}
.tabpanel {
	height:44px;
	padding:4px 5px 0;
	border-top:2px solid #fafafa;
	border-right:1px solid #888;
	border-bottom:1px solid #888;
}
.blocktools {
	display:flex;
	justify-content:space-between;
	width:423px;
}
.blocktools button {
	width:32px;
	height:33px;
}
.sunken {
	border:1px solid;
	border-color:#888 #fff #fff #888;
	background:#f4f4f4;
}

/* panes */
main {
	flex:1;
	display:flex;
	min-height:0;
	padding-top:2px;
}
.side {
	display:flex;
	flex-direction:column;
	width:436px;
	border-right:2px solid #888;
}
.work {
	flex:1;
	display:flex;
	flex-direction:column;
	min-width:0;
	padding-left:4px;
}
.rule {
	flex:none;
	height:2px;
	margin:0 11px 0 4px;
	background:#909090;
	box-shadow:0 -1px #fff;
}
.work .rule {
	margin:8px 4px 7px 0;
}

/* model tree */
.tree {
	position:relative;
	flex:none;
	height:241px;
	margin:4px 12px 10px 5px;
	padding:2px 0 0 6px;
	border:2px solid;
	border-color:#222 #fff #fff #222;
	background:#fff;
}
.branches {
	position:absolute;
	left:0;
	top:0;
}
.tree ul {
	position:relative;
	display:grid;
	grid-auto-rows:1fr;
	height:168px;
	list-style:none;
}
.tree li {
	display:flex;
	align-items:center;
}
.tree li > button {
	width:11px;
	height:11px;
	margin-right:13px;
	border:1px solid #808080;
	background:#fff linear-gradient(#555, #555) center/5px 1px no-repeat;
}
.tree li > .plus {
	background:linear-gradient(#555, #555) center/5px 1px no-repeat, linear-gradient(#555, #555) center/1px 5px no-repeat, #fff;
}
.tree .l1 {
	padding-left:12px;
}
.tree .l2 {
	padding-left:48px;
}
.tree label {
	display:flex;
	align-items:center;
}
.tree label input {
	appearance:none;
	position:relative;
	width:11px;
	height:11px;
	margin-right:13px;
	border:1px solid #808080;
	background:#fff;
}
.tree label input:checked::after {
	content:"";
	position:absolute;
	left:-1px;
	top:-4px;
	width:15px;
	height:14px;
	background:#089018;
	clip-path:polygon(0 50%, 20% 45%, 38% 68%, 85% 0, 100% 0, 45% 100%, 25% 100%);
}
.tree label .part:checked {
	background:#ddd;
}
.tree label .part:checked::after {
	background:#999;
}
.tree span {
	padding:0 1px;
}
.tree .selected {
	background:#0078d7;
	color:#fff;
}
.circle { color:#6a35cf; }
.geom { color:#4046d8; }
.line { color:#8428b8; }
.solid { color:#80e048; }
.vorfn { color:#e07040; }

/* split block form */
.side-head {
	flex:none;
	display:flex;
	align-items:center;
	justify-content:space-between;
	height:45px;
	margin:0 14px 0 6px;
	padding:2px 4px 0 2px;
	border-bottom:1px solid #666;
}
h2, legend {
	font-size:15px;
	font-weight:bold;
	line-height:20px;
}
.side-body {
	flex:1;
	display:flex;
	min-height:0;
	margin:6px 11px 6px 4px;
	overflow:hidden;
}
fieldset {
	min-width:0;
	margin:0;
	padding:0;
	border:2px groove #e8e8e8;
}
legend {
	margin-left:4px;
	padding:0 3px;
}
.group {
	flex:1;
	margin-right:2px;
	padding:8px 6px 0;
	border-bottom:0;
}
.splits {
	display:grid;
	grid-template-columns:repeat(5, 46px);
	grid-auto-rows:51px;
}
.splits button {
	width:46px;
	height:48px;
}
hr {
	margin:3px 3px 8px;
	border:0;
	border-top:1px solid #666;
}
.ogrid {
	padding:7px 9px 0 5px;
}
.ogrid > .btn {
	width:98px;
	height:27px;
	margin:5px 0 9px;
}
.selects {
	display:grid;
	grid-template-columns:100px 30px 30px;
	grid-auto-rows:1fr;
	column-gap:10px;
	align-items:center;
	height:130px;
	padding-left:6px;
}
.selects span {
	padding-right:6px;
	text-align:center;
	white-space:nowrap;
}
.selects .off {
	color:#888;
}
.selects button:disabled {
	opacity:.6;
}
.btn {
	border:1px solid;
	border-color:#fff #777 #777 #fff;
	box-shadow:1px 1px #999;
}
.option {
	display:flex;
	align-items:center;
	gap:7px;
	height:24px;
	margin-bottom:7px;
	padding-left:6px;
}
.box {
	appearance:none;
	width:15px;
	height:15px;
	border:2px solid;
	border-color:#888 #fff #fff #888;
	background:#fff;
}
.offset {
	display:flex;
	align-items:center;
	justify-content:flex-end;
	gap:8px;
	margin-bottom:8px;
}
.offset input {
	width:241px;
	height:24px;
	padding-left:3px;
	border:2px solid;
	border-color:#333 #fff #fff #333;
	background:#fff;
}
.actions {
	flex:none;
	display:flex;
	justify-content:center;
	gap:4px;
	padding:5px 19px 0 0;
}
.actions .btn {
	width:73px;
	height:25px;
}
.actions .default {
	border:2px solid #777;
}

/* scroll bars */
.scrollbar {
	flex:none;
	display:flex;
	flex-direction:column;
	width:21px;
	margin-top:2px;
	background:#f8f8f8;
}
.scrollbar button, .thumb {
	border:2px solid;
	border-color:#fff #888 #888 #fff;
	background:#f0f0f0;
}
.scrollbar button {
	flex:none;
	height:21px;
}
.up::before, .down::before {
	content:"";
	width:9px;
	height:5px;
	background:#000;
	clip-path:polygon(50% 0, 100% 100%, 0 100%);
}
.scrollbar .down {
	margin-top:auto;
}
.down::before {
	clip-path:polygon(0 0, 100% 0, 50% 100%);
}
.long {
	height:80%;
	border-top-color:#f0f0f0;
}
.trough {
	flex:1;
}
.short {
	height:16px;
}

/* graphics window */
.canvas {
	position:relative;
	flex:1;
	min-height:0;
	margin:3px 4px 0 1px;
	background:#fff;
}
.scene {
	position:absolute;
	width:100%;
	height:100%;
}
.triad {
	position:absolute;
	right:0;
	bottom:56px;
	overflow:visible;
}
.axis {
	font:14px "DejaVu Serif", serif;
}
.x { fill:#e01818; }
.y { fill:#20d820; }
.z { fill:#0000c0; }
.prompt {
	position:absolute;
	left:15px;
	bottom:8px;
	padding:0 4px;
	background:#000;
	color:#f00a0a;
	font:23px/32px Roboto, sans-serif;
	white-space:nowrap;
}

/* message window */
.messages {
	flex:none;
	height:144px;
	margin-right:12px;
	padding-right:10px;
	border-right:2px solid #888;
}
.log-row {
	display:flex;
	gap:2px;
	height:108px;
}
.log-row .scrollbar {
	margin-top:0;
}
.log {
	flex:1;
	padding:23px 0 0 7px;
	border:2px solid;
	border-color:#222 #fff #fff #222;
	background:#fff;
}
.info {
	color:#1818d8;
}
.log-tools {
	display:flex;
	align-items:center;
	gap:5px;
	height:36px;
	padding:1px 0 0 4px;
}
.log-tools .option {
	margin:0 8px 0 0;
}
.log-tools .btn {
	width:39px;
	height:30px;
}
.stub {
	width:12px;
	height:29px;
	margin-left:auto;
	border:1px solid;
	border-color:#fff #999 #999 #fff;
}

/* floating selection toolbar */
.popup {
	position:absolute;
	top:134px;
	right:0;
	width:354px;
	padding:3px 2px 5px 4px;
	border:3px solid;
	border-color:#fff #a0a0a0 #a0a0a0 #fff;
	background:#f0f0f0;
	box-shadow:inset 3px 3px #a0a0a0, inset -2px -2px #fff;
}
.popup-title {
	display:flex;
	align-items:center;
	justify-content:space-between;
	height:24px;
	padding:0 1px 0 8px;
	background:#00f;
	color:#fff;
}
.popup-title button {
	width:20px;
	height:20px;
	background:#f0f0f0;
}
.popup-tools {
	display:flex;
	justify-content:space-between;
	height:39px;
	padding-top:1px;
}
.popup-tools button {
	width:38px;
	height:38px;
}
.raised {
	border:1px solid;
	border-color:#fff #777 #777 #fff;
}

/* task bar */
.taskbar {
	flex:none;
	display:flex;
	justify-content:space-between;
	height:38px;
	background:#212628;
	color:#fff;
}
.taskbar button {
	height:38px;
}
.sys, .apps {
	display:flex;
}
.sys button {
	width:45px;
}
.apps {
	margin:0 auto 0 3px;
}
.apps button {
	position:relative;
	width:46px;
}
.apps .open::after {
	content:"";
	position:absolute;
	left:5px;
	right:5px;
	bottom:0;
	height:3px;
	background:#b8b0b4;
}
.apps .active {
	background:#3c3f42;
}
.apps .active::after {
	left:0;
	right:0;
}
.tray {
	display:flex;
	align-items:center;
	padding-right:5px;
}
.tray button, .ime {
	width:30px;
	text-align:center;
}
.ime {
	font:16px/24px "Noto Sans CJK SC", sans-serif;
}
.tray time {
	margin-left:8px;
	font:15px/24px "Open Sans", sans-serif;
}
.tray .notify {
	width:70px;
}
.tray i {
	width:1px;
	height:38px;
	background:#666;
}
```
